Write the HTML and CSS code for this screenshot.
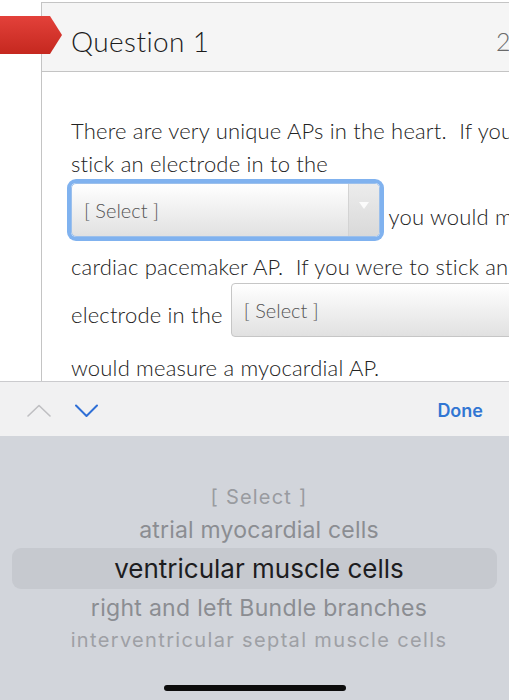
FILE: index.html
```html
<!DOCTYPE html>
<html lang="en">
<head>
<meta charset="utf-8">
<title>Question 1</title>
<link rel="stylesheet" href="styles.css">
</head>
<body>
<div class="screen">
  <div class="page">
    <div class="flag"></div>
    <div class="card">
      <div class="card-head">
        <span class="q-title">Question 1</span>
        <span class="q-pts">2 pts</span>
      </div>
      <div class="card-body">
        <p class="q-text">There are very unique APs in the heart.&nbsp; If you were to<br>stick an electrode in to the<br><span class="sel sel-focus"><span class="sel-label">[ Select ]</span><span class="sel-arrow"><span class="tri"></span></span></span> you would measure a<br>cardiac pacemaker AP.&nbsp; If you were to stick an<br>electrode in the <span class="sel sel-wide"><span class="sel-label">[ Select ]</span></span> you<br>would measure a myocardial AP.</p>
      </div>
    </div>
  </div>
  <div class="kb-bar">
    <svg class="chev" width="24" height="13" viewBox="0 0 24 13"><polyline points="1,12 12,1.5 23,12" fill="none" stroke="#bfbfc2" stroke-width="1.6" stroke-linecap="round" stroke-linejoin="round"/></svg>
    <svg class="chev chev-down" width="23" height="13" viewBox="0 0 23 13"><polyline points="1,1.5 11.5,12 22,1.5" fill="none" stroke="#2f6fd6" stroke-width="2" stroke-linecap="round" stroke-linejoin="round"/></svg>
    <span class="done">Done</span>
  </div>
  <div class="picker">
    <div class="row row-1">[ Select ]</div>
    <div class="row row-2">atrial myocardial cells</div>
    <div class="row row-sel">ventricular muscle cells</div>
    <div class="row row-4">right and left Bundle branches</div>
    <div class="row row-5">interventricular septal muscle cells</div>
    <div class="home"></div>
  </div>
</div>
</body>
</html>
```
FILE: styles.css
```css
html, body {
  margin: 0;
  padding: 0;
  background: #ffffff;
}

.screen {
  width: 509px;
  height: 700px;
  overflow: hidden;
  display: flex;
  flex-direction: column;
  font-family: Lato, "Liberation Sans", sans-serif;
}

.page {
  position: relative;
  height: 381px;
  flex: 0 0 381px;
  overflow: hidden;
  background: #ffffff;
}

.flag {
  position: absolute;
  left: 0;
  top: 16px;
  width: 62px;
  height: 38px;
  background: linear-gradient(#e3413a, #c5281f);
  clip-path: polygon(0 0, 50px 0, 62px 19px, 50px 38px, 0 38px);
  z-index: 2;
}

.card {
  margin: 2px 0 0 41px;
  width: 640px;
  border-left: 1px solid #c4c4c4;
  border-top: 1px solid #c4c4c4;
}

.card-head {
  height: 69px;
  box-sizing: border-box;
  background: #f5f5f5;
  border-bottom: 1px solid #c4c4c4;
  display: flex;
  align-items: center;
  padding: 7px 0 0 29px;
}

.q-title {
  width: 425px;
  font-size: 28px;
  font-weight: 300;
  letter-spacing: 0.4px;
  color: #1c1c1c;
}

.q-pts {
  font-size: 25px;
  font-weight: 300;
  color: #6a6a6a;
  white-space: nowrap;
}

.card-body {
  padding: 42px 0 0 29px;
}

.q-text {
  margin: 0;
  font-size: 22px;
  font-weight: 300;
  letter-spacing: 0.18px;
  line-height: 33px;
  color: #222222;
  white-space: nowrap;
}

.sel {
  display: inline-flex;
  align-items: center;
  box-sizing: border-box;
  height: 54px;
  margin: 3px 3px 13px 0;
  border: 1px solid #c6c6c6;
  border-radius: 4px;
  background: linear-gradient(#ffffff, #e1e1e1);
  vertical-align: 7px;
  font-size: 20px;
  letter-spacing: 0;
  line-height: 24px;
  color: #555555;
  overflow: hidden;
}

.sel-label {
  padding-left: 12px;
}

.sel-focus {
  width: 309px;
  border-color: #9cc0ec;
  border-radius: 5px;
  box-shadow: 0 0 0 4px #80b2ef;
}

.sel-wide {
  width: 330px;
  margin-top: 0;
  margin-bottom: 14px;
  margin-left: 2px;
  vertical-align: 5px;
}

.sel-arrow {
  margin-left: auto;
  align-self: stretch;
  width: 30px;
  border-left: 1px solid #d3d3d3;
  background: linear-gradient(#ececec, #d9d9d9);
  display: flex;
  align-items: center;
  justify-content: center;
}

.tri {
  width: 0;
  height: 0;
  border-left: 5px solid transparent;
  border-right: 5px solid transparent;
  border-top: 7px solid #fbfbfb;
  margin-top: -10px;
}

.kb-bar {
  flex: 0 0 55px;
  height: 55px;
  box-sizing: border-box;
  border-top: 1px solid #cbcbce;
  background: #f1f1f2;
  display: flex;
  align-items: center;
  padding: 2px 26px 0 27px;
}

.chev {
  display: block;
}

.chev-down {
  margin-left: 24px;
}

.done {
  margin-left: auto;
  font-family: Inter, "Liberation Sans", sans-serif;
  font-weight: 600;
  font-size: 18px;
  color: #3176d3;
}

.picker {
  flex: 1 1 auto;
  background: #d2d5db;
  padding-top: 46px;
  font-family: Inter, "Liberation Sans", sans-serif;
  display: flex;
  flex-direction: column;
  align-items: stretch;
}

.row {
  text-align: center;
  white-space: nowrap;
  color: #8b8d92;
  padding-left: 9px;
}

.row-1 {
  height: 30px;
  line-height: 30px;
  font-size: 20px;
  letter-spacing: 1.2px;
  color: #999ba0;
}

.row-2 {
  height: 36px;
  line-height: 36px;
  font-size: 23px;
  letter-spacing: 0.2px;
}

.row-sel {
  height: 41px;
  line-height: 42px;
  margin: 0 12px;
  padding-left: 9px;
  border-radius: 9px;
  background: #c6c9cf;
  font-size: 26px;
  color: #1d1d1f;
}

.row-4 {
  height: 38px;
  line-height: 38px;
  font-size: 23px;
  letter-spacing: 0.3px;
}

.row-5 {
  height: 26px;
  line-height: 26px;
  font-size: 20px;
  letter-spacing: 1.35px;
  color: #9ea0a5;
}

.home {
  align-self: center;
  width: 182px;
  height: 6px;
  margin-top: 32px;
  border-radius: 3px;
  background: #0c0c0c;
}
```
